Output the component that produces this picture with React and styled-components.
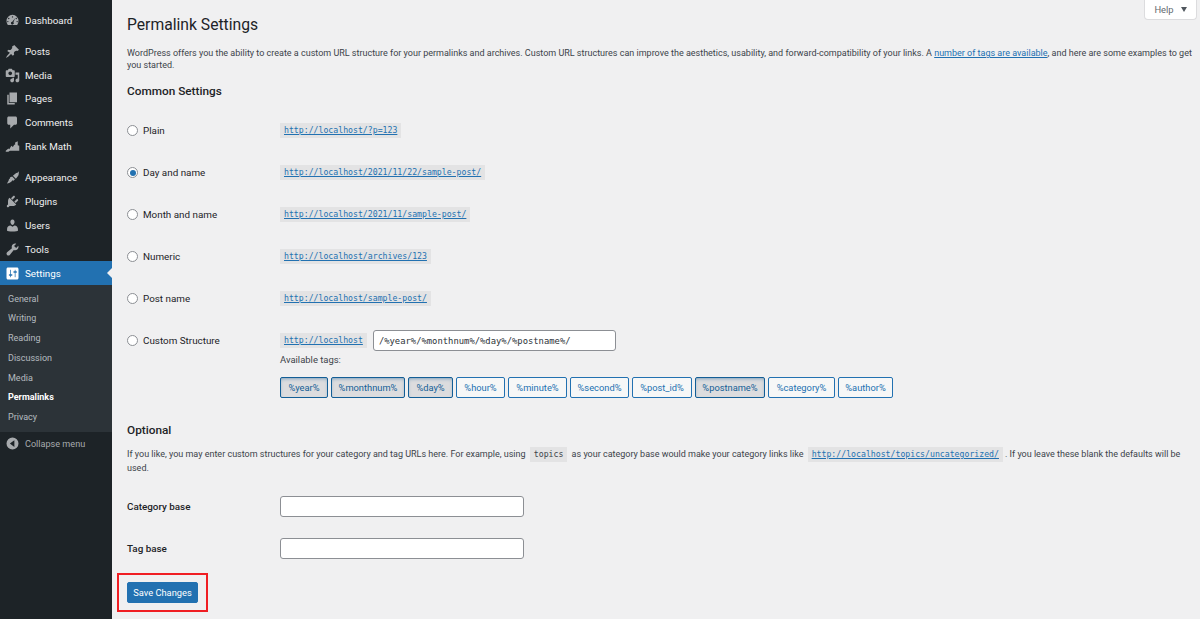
import React from "react";
import styled, { createGlobalStyle } from "styled-components";

const Global = createGlobalStyle`
  html, body { margin: 0; padding: 0; background: #f0f0f1; }
  body { font-family: Roboto, "Open Sans", "Liberation Sans", sans-serif; font-size: 9.8px; color: #3c434a; height: 619px; overflow: hidden; }
  * { box-sizing: border-box; }
`;

const Page = styled.div`display: flex; width: 1200px; height: 619px; overflow: hidden;`;
const Sidebar = styled.nav`width: 112px; flex: none; background: #1d2327; padding-top: 8.200px; display: flex; flex-direction: column;`;
const MenuGroup = styled.div`display: flex; flex-direction: column; margin-bottom: ${p => p.$gap ?? 7.5}px;`;
const MenuItem = styled.div`
  position: relative; height: 23.8px; display: flex; align-items: center; gap: 5px; padding-left: 5px;
  color: ${p => p.$active ? "#fff" : "#f0f0f1"}; background: ${p => p.$active ? "#2271b1" : "transparent"};
  font-size: 9.8px;
  svg { flex: none; width: 15px; height: 15px; fill: ${p => p.$active ? "#fff" : "#a7aaad"}; }
`;
const ActiveArrow = styled.span`
  position: absolute; right: 0; top: 7px; width: 0; height: 0;
  border-style: solid; border-width: 5px 5px 5px 0; border-color: transparent #f0f0f1 transparent transparent;
`;
const SubMenu = styled.div`background: #2c3338; padding: 4px 0 5px; display: flex; flex-direction: column;`;
const SubItem = styled.div`
  height: 19.7px; display: flex; align-items: center; padding-left: 8px; font-size: 9px;
  color: ${p => p.$current ? "#fff" : "rgba(240,246,252,.7)"}; font-weight: ${p => p.$current ? 700 : 400};
`;
const Collapse = styled.div`
  height: 24px; display: flex; align-items: center; gap: 5px; padding-left: 5px; font-size: 9.1px; color: #a7aaad;
  svg { width: 15px; height: 15px; fill: #a7aaad; }
`;

const Main = styled.main`flex: 1; min-width: 0; padding: 0 8px 0 15px; display: flex; flex-direction: column;`;
const HelpRow = styled.div`display: flex; justify-content: flex-end; height: 0; margin-right: -5px;`;
const HelpTab = styled.div`
  width: 53px; height: 20px; flex: none; background: #fff; border: 1px solid #dcdcde; border-top: 0; border-radius: 0 0 4px 4px;
  display: flex; align-items: center; justify-content: center; gap: 7px; font-size: 9.4px; color: #646970;
`;
const Caret = styled.span`width: 0; height: 0; border-style: solid; border-width: 5px 3.5px 0; border-color: #50575e transparent transparent;`;
const Title = styled.h1`margin: 14px 0 0; font-size: 15.7px; line-height: 21px; font-weight: 400; color: #1d2327;`;
const Intro = styled.p`margin: 12px 0 0; font-size: 9px; line-height: 12.3px; color: #3c434a;`;
const TextLink = styled.a`color: #2271b1; text-decoration: underline;`;
const Heading = styled.h2`margin: 12px 0 0; font-size: 11.8px; line-height: 15px; font-weight: 500; color: #1d2327;`;
const Options = styled.div`margin-top: 11px; display: flex; flex-direction: column;`;
const OptionRow = styled.div`display: flex; align-items: center; height: 42px;`;
const RadioLabel = styled.label`width: 153px; flex: none; display: flex; align-items: center; gap: 5px; font-size: 9.85px; color: #1d2327;`;
const Radio = styled.span`
  width: 11px; height: 11px; flex: none; border-radius: 50%; border: 1px solid #8c8f94; background: #fff;
  display: flex; align-items: center; justify-content: center;
  &::after { content: ""; width: 6px; height: 6px; border-radius: 50%; background: ${p => p.$checked ? "#2271b1" : "transparent"}; }
`;
const Code = styled.code`
  display: inline-block; background: #e3e3e4; padding: 0 4px; font-family: "DejaVu Sans Mono", "Liberation Mono", monospace;
  font-size: 8.2px; line-height: 15px; color: #3c434a;
`;
const CodeLink = styled.a`color: #2271b1; text-decoration: underline;`;
const CustomInput = styled.div`
  width: 243px; height: 21px; margin-left: 6px; background: #fff; border: 1px solid #8c8f94; border-radius: 3px; padding-left: 5px;
  display: flex; align-items: center; font-family: "DejaVu Sans Mono", "Liberation Mono", monospace; font-size: 8.85px; color: #2c3338;
`;
const TagsBlock = styled.div`margin-left: 153px; margin-top: -8px;`;
const TagsLabel = styled.div`font-size: 9.45px; line-height: 12px; color: #3c434a;`;
const Tags = styled.div`display: flex; gap: 3px; margin-top: 11px;`;
const Tag = styled.span`
  height: 21px; flex: none; display: flex; align-items: center; border-radius: 2px; font-size: 9.3px;
  width: ${p => p.$w}px; justify-content: center;
  border: 1px solid ${p => p.$on ? "#135e96" : "#2271b1"}; background: ${p => p.$on ? "#dcdcde" : "#f6f7f7"};
  box-shadow: ${p => p.$on ? "inset 0 2px 5px -3px #135e96" : "none"};
  color: ${p => p.$on ? "#135e96" : "#2271b1"};
`;
const OptionalHeading = styled(Heading)`margin-top: 25px;`;
const OptionalText = styled.p`margin: 9px 0 0; font-size: 9px; line-height: 12.3px; color: #3c434a; padding-right: 2px;`;
const InlineCode = styled(Code)`margin: 0 2px;`;
const FieldRow = styled.div`display: flex; align-items: center; height: 42px;`;
const FieldLabel = styled.label`width: 153px; flex: none; font-size: 9.85px; font-weight: 500; color: #1d2327;`;
const Input = styled.div`width: 244px; height: 21px; background: #fff; border: 1px solid #8c8f94; border-radius: 3px;`;
const Fields = styled.div`margin-top: 12px; display: flex; flex-direction: column;`;
const Highlight = styled.div`
  align-self: flex-start; margin: 3px 0 0 -10px; width: 91px; height: 39px; border: 2px solid #f01e23;
  display: flex; align-items: center; padding-left: 8px;
`;
const SaveButton = styled.button`
  width: 71px; height: 21px; padding: 0; border: 1px solid #2271b1; border-radius: 2px; background: #2271b1; color: #fff;
  font-family: inherit; font-size: 9.3px;
`;

const I = ({ d }) => <svg viewBox="0 0 20 20"><path d={d} /></svg>;
const icons = {
  dashboard: "M10 2.500a8 8 0 0 0-8 8.300c0 2 .7 3.800 1.800 5.200h12.400a8.300 8.300 0 0 0 1.800-5.200 8 8 0 0 0-8-8.300zM10 4.300a.9.9 0 1 1 0 1.800.9.9 0 0 1 0-1.800zM5 6.400a.9.9 0 1 1 0 1.800.9.9 0 0 1 0-1.800zM15 6.400a.9.9 0 1 1 0 1.800.9.9 0 0 1 0-1.800zM3.800 10.500a.9.9 0 1 1 0 1.800.9.9 0 0 1 0-1.800zM16.200 10.500a.9.9 0 1 1 0 1.800.9.9 0 0 1 0-1.800zM13.500 7l-2.300 5.200a1.900 1.900 0 1 1-1.500-.6z",
  posts: "M10.440 3.020l1.820-1.820 6.360 6.350-1.830 1.820c-1.050-.68-2.480-.57-3.410.36l-.75.75c-.92.93-1.040 2.350-.35 3.410l-1.830 1.820-2.410-2.410-2.800 2.790c-.42.42-3.380 2.710-3.800 2.290s1.860-3.390 2.280-3.810l2.790-2.790L2.900 9.360l1.830-1.820c1.050.69 2.480.57 3.400-.36l.75-.75c.93-.92 1.050-2.350.36-3.410z",
  media: "M13 11V4c0-.55-.45-1-1-1h-1.670L9 1H5L3.670 3H2c-.55 0-1 .45-1 1v7c0 .55.45 1 1 1h10c.55 0 1-.45 1-1zM7 4.500c1.380 0 2.500 1.120 2.500 2.500S8.380 9.500 7 9.500 4.500 8.380 4.500 7 5.620 4.500 7 4.500zM14 6h5v10.500c0 1.380-1.120 2.500-2.500 2.500S14 17.880 14 16.500s1.120-2.500 2.500-2.500c.17 0 .34.020.5.050V9h-3V6zm-4 8.050V13h2v3.500c0 1.380-1.120 2.500-2.500 2.500S7 17.880 7 16.500 8.120 14 9.500 14c.17 0 .34.020.5.050z",
  pages: "M6 15V2h10v13H6zm-1 1h8v2H3V5h2v11z",
  comments: "M5 2h9c1.100 0 2 .9 2 2v7c0 1.100-.9 2-2 2h-2l-5 5v-5H5c-1.100 0-2-.9-2-2V4c0-1.100.9-2 2-2z",
  rank: "M1 15.500l3.500-3 1.200 1 2.800-4.500 2 1.800 2-3.500 1 .8V4.500l3.500-1.500v5.200l2 .8v6.500H6.500l-2 1.500H1z",
  appearance: "M18.500 1.800l-.2 3.500c-.1 1.200-.5 2.200-1.200 3l-2.600 3.200-4-4 3.200-2.600c.8-.7 1.800-1.100 3-1.200zM9.500 8.500l3.700 3.700-1.700 2-1.500-.4-1.300 1.400c-.8.900-3.800 2.500-6.200 2.800 1.300-1.500 2.400-3.600 2.800-5.700l1.500-1.300-.3-1z",
  plugins: "M13.110 4.360L9.870 7.600 8 5.730l3.240-3.240c.35-.34 1.050-.2 1.560.32.52.51.66 1.210.31 1.550zm-8 1.770l.91-1.120 9.010 9.010-1.190.84c-.71.71-2.630 1.160-3.820 1.160H6.140L4.900 17.260c-.59.59-1.540.59-2.120 0-.59-.58-.59-1.530 0-2.120l1.240-1.240v-3.880c0-1.130.4-3.050 1.090-3.890zm7.260 3.970l3.240-3.240c.34-.35 1.040-.21 1.550.31.52.51.66 1.210.31 1.550l-3.240 3.250z",
  users: "M10 9.250c-2.270 0-2.730-3.440-2.730-3.440C7 4.020 7.820 2 9.970 2c2.160 0 2.980 2.020 2.710 3.810 0 0-.41 3.440-2.680 3.440zm0 2.570L12.720 10c2.390 0 4.520 2.330 4.520 4.530v2.490s-3.650 1.130-7.240 1.130c-3.650 0-7.240-1.130-7.240-1.130v-2.490c0-2.250 1.940-4.480 4.470-4.480z",
  tools: "M16.680 9.770c-1.340 1.340-3.300 1.670-4.950.99l-5.410 6.520c-.99.99-2.590.99-3.570 0-.99-.98-.99-2.580 0-3.570l6.520-5.420c-.68-1.650-.35-3.610.99-4.950 1.280-1.280 3.120-1.620 4.720-1.060l-2.890 2.890 2.820 2.820 2.860-2.870c.53 1.580.18 3.390-1.090 4.670z",
  settings: "M18 16V4c0-1.100-.9-2-2-2H4c-1.100 0-2 .9-2 2v12c0 1.100.9 2 2 2h12c1.100 0 2-.9 2-2zM8 11h1c.55 0 1 .45 1 1s-.45 1-1 1H8v1.500c0 .28-.22.5-.5.5s-.5-.22-.5-.5V13H6c-.55 0-1-.45-1-1s.45-1 1-1h1V5.500c0-.28.22-.5.5-.5s.5.220.5.5V11zm5-2h-1c-.55 0-1-.45-1-1s.45-1 1-1h1V5.500c0-.28.22-.5.5-.5s.5.220.5.500V7h1c.55 0 1 .45 1 1s-.45 1-1 1h-1v5.500c0 .28-.22.5-.5.5s-.5-.22-.5-.5V9z",
  collapse: "M10 2a8 8 0 1 1 0 16 8 8 0 0 1 0-16zM12.500 5.500L6.500 10l6 4.500z",
};

const Item = ({ icon, label, active }) => (
  <MenuItem $active={active}>
    <I d={icons[icon]} />
    <span>{label}</span>
    {active && <ActiveArrow />}
  </MenuItem>
);

const rows = [
  ["Plain", "http://localhost/?p=123"],
  ["Day and name", "http://localhost/2021/11/22/sample-post/", true],
  ["Month and name", "http://localhost/2021/11/sample-post/"],
  ["Numeric", "http://localhost/archives/123"],
  ["Post name", "http://localhost/sample-post/"],
];
const tags = [
  ["%year%", 48, true], ["%monthnum%", 74, true], ["%day%", 45, true], ["%hour%", 49], ["%minute%", 59],
  ["%second%", 59], ["%post_id%", 60], ["%postname%", 70, true], ["%category%", 67], ["%author%", 55],
];

export default function App() {
  return (
    <Page>
      <Global />
      <Sidebar>
        <MenuGroup>
          <Item icon="dashboard" label="Dashboard" />
        </MenuGroup>
        <MenuGroup>
          <Item icon="posts" label="Posts" />
          <Item icon="media" label="Media" />
          <Item icon="pages" label="Pages" />
          <Item icon="comments" label="Comments" />
          <Item icon="rank" label="Rank Math" />
        </MenuGroup>
        <MenuGroup $gap={0}>
          <Item icon="appearance" label="Appearance" />
          <Item icon="plugins" label="Plugins" />
          <Item icon="users" label="Users" />
          <Item icon="tools" label="Tools" />
          <Item icon="settings" label="Settings" active />
        </MenuGroup>
        <SubMenu>
          {["General", "Writing", "Reading", "Discussion", "Media"].map(s => <SubItem key={s}>{s}</SubItem>)}
          <SubItem $current>Permalinks</SubItem>
          <SubItem>Privacy</SubItem>
        </SubMenu>
        <Collapse><I d={icons.collapse} /><span>Collapse menu</span></Collapse>
      </Sidebar>
      <Main>
        <HelpRow><HelpTab>Help <Caret /></HelpTab></HelpRow>
        <Title>Permalink Settings</Title>
        <Intro>
          WordPress offers you the ability to create a custom URL structure for your permalinks and archives. Custom URL structures can improve the aesthetics, usability, and forward-compatibility of your links. A <TextLink>number of tags are available</TextLink>, and here are some examples to get you started.
        </Intro>
        <Heading>Common Settings</Heading>
        <Options>
          {rows.map(([label, url, checked]) => (
            <OptionRow key={label}>
              <RadioLabel><Radio $checked={checked} />{label}</RadioLabel>
              <Code><CodeLink>{url}</CodeLink></Code>
            </OptionRow>
          ))}
          <OptionRow>
            <RadioLabel><Radio />Custom Structure</RadioLabel>
            <Code><CodeLink>http://localhost</CodeLink></Code>
            <CustomInput>/%year%/%monthnum%/%day%/%postname%/</CustomInput>
          </OptionRow>
          <TagsBlock>
            <TagsLabel>Available tags:</TagsLabel>
            <Tags>
              {tags.map(([t, w, on]) => <Tag key={t} $w={w} $on={on}>{t}</Tag>)}
            </Tags>
          </TagsBlock>
        </Options>
        <OptionalHeading>Optional</OptionalHeading>
        <OptionalText>
          If you like, you may enter custom structures for your category and tag URLs here. For example, using <InlineCode>topics</InlineCode> as your category base would make your category links like <InlineCode><CodeLink>http://localhost/topics/uncategorized/</CodeLink></InlineCode>. If you leave these blank the defaults will be used.
        </OptionalText>
        <Fields>
          <FieldRow><FieldLabel>Category base</FieldLabel><Input /></FieldRow>
          <FieldRow><FieldLabel>Tag base</FieldLabel><Input /></FieldRow>
        </Fields>
        <Highlight><SaveButton>Save Changes</SaveButton></Highlight>
      </Main>
    </Page>
  );
}
